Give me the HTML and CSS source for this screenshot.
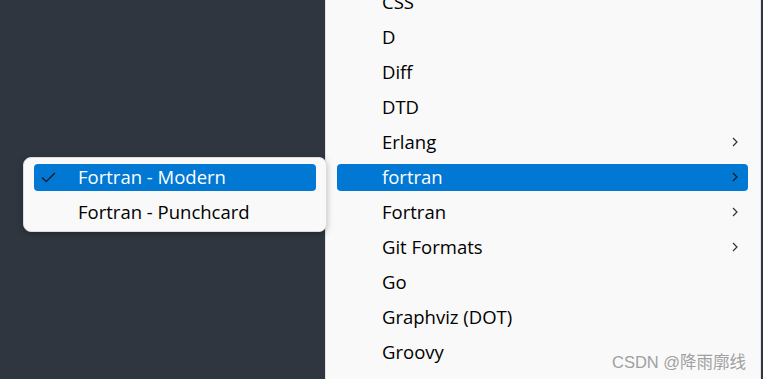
FILE: index.html
```html
<!DOCTYPE html>
<html lang="en">
  <head>
    <meta charset="UTF-8" />
    <title>Language menu</title>
    <link rel="stylesheet" href="styles.css">
  </head>
  <body>
    <div class="desk"></div>

    <ul class="menu">
      <li class="item">CSS</li>
      <li class="item">D</li>
      <li class="item">Diff</li>
      <li class="item">DTD</li>
      <li class="item">Erlang <svg class="chev" viewBox="0 0 6 10"><path d="M1 1l4 4-4 4" /></svg></li>
      <li class="item active">fortran <svg class="chev" viewBox="0 0 6 10"><path d="M1 1l4 4-4 4" /></svg></li>
      <li class="item">Fortran <svg class="chev" viewBox="0 0 6 10"><path d="M1 1l4 4-4 4" /></svg></li>
      <li class="item">Git Formats <svg class="chev" viewBox="0 0 6 10"><path d="M1 1l4 4-4 4" /></svg></li>
      <li class="item">Go</li>
      <li class="item">Graphviz (DOT)</li>
      <li class="item">Groovy</li>
    </ul>

    <ul class="submenu">
      <li class="item active">
        <svg class="check" viewBox="0 0 16 12"><path d="M1 6l4.5 4.5L15 1" /></svg>
        Fortran - Modern
      </li>
      <li class="item">Fortran - Punchcard</li>
    </ul>

    <div class="mark">CSDN @降雨廓线</div>
  </body>
</html>
```

FILE: styles.css
```css
body {
  margin: 0;
  height: 379px;
  overflow: hidden;
  display: flex;
  align-items: flex-start;
  background: #2f363f;
  font-family: "Open Sans", "Noto Sans", sans-serif;
  font-size: 18.5px;
  color: #000;
  position: relative;
}

ul {
  list-style: none;
  margin: 0;
  padding: 0;
  display: flex;
  flex-direction: column;
  gap: 8px;
}

.desk {
  width: 325px;
  flex: none;
}

.menu {
  flex: 1;
  align-self: stretch;
  margin-top: -11px;
  margin-right: 2px;
  padding: 0 12px 0 11px;
  background: #f9f9f9;
  border-left: 1px solid #e2e2e2;
  border-right: 1px solid #e6e6e6;
}

.item {
  flex: none;
  height: 27px;
  box-sizing: border-box;
  padding: 0 10px 2px 45px;
  display: flex;
  align-items: center;
  border-radius: 4px;
}

.item.active {
  background: #0078d4;
  color: #fff;
}

.chev {
  margin-left: auto;
  width: 6px;
  height: 10px;
  fill: none;
  stroke: #333;
  stroke-width: 1.2;
}

.active .chev {
  stroke: #1a1a1a;
}

.submenu {
  position: absolute;
  left: 23px;
  top: 157px;
  width: 282px;
  padding: 6px 10px 5px;
  background: #f9f9f9;
  border: 1px solid #dcdcdc;
  border-radius: 8px;
  box-shadow: 0 2px 6px rgb(0 0 0 / 0.25);
}

.submenu .item {
  padding-left: 44px;
  position: relative;
}

.check {
  position: absolute;
  left: 7px;
  top: 8px;
  width: 15px;
  height: 11px;
  fill: none;
  stroke: #1a1a1a;
  stroke-width: 1.5;
}

.mark {
  position: absolute;
  left: 612px;
  top: 349px;
  color: #a0a0a0;
  font-family: "Liberation Sans", "Noto Sans CJK SC", sans-serif;
  font-size: 16.5px;
}
```
